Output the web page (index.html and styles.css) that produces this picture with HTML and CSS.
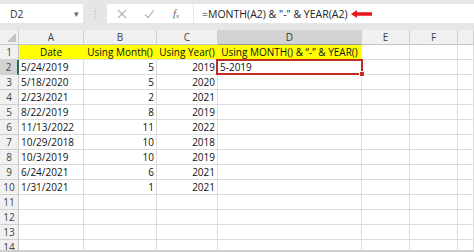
FILE: index.html
```html
<!DOCTYPE html>
<html>
<head>
<meta charset="utf-8">
<link rel="stylesheet" href="styles.css">
</head>
<body>
<div class="app">
  <div class="fbar">
    <div class="namebox"><span>D2</span><span class="dd">▾</span></div>
    <div class="sep">⁝</div>
    <div class="btns">
      <svg class="ic" width="10" height="10" viewBox="0 0 10 10"><path d="M1 1L9 9M9 1L1 9" stroke="#b4b4b4" stroke-width="1.2" fill="none"/></svg>
      <svg class="ic" width="11" height="10" viewBox="0 0 11 10"><path d="M1 5.5L4 8.5L10 1" stroke="#b4b4b4" stroke-width="1.2" fill="none"/></svg>
      <span class="fx">f<sub>x</sub></span>
    </div>
    <div class="input">
      <span class="ftext">=MONTH(A2) &amp; "-" &amp; YEAR(A2)</span>
      <svg class="arrow" width="21" height="8" viewBox="0 0 21 8"><path d="M0 4L6 0V2.2H21V5.8H6V8Z" fill="#e8161b"/></svg>
    </div>
  </div>
  <div class="grid">
    <div class="c h corner"><span class="tri"></span></div><div class="c h">A</div><div class="c h">B</div><div class="c h">C</div><div class="c h sel">D</div><div class="c h">E</div><div class="c h">F</div><div class="c h"></div>

    <div class="c rh">1</div><div class="c y ctr">Date</div><div class="c y ctr">Using Month()</div><div class="c y ctr">Using Year()</div><div class="c y ctr">Using MONTH() &amp; “-” &amp; YEAR()</div><div class="c"></div><div class="c"></div><div class="c"></div>

    <div class="c rh rsel">2</div><div class="c">5/24/2019</div><div class="c n">5</div><div class="c n">2019</div><div class="c active">5-2019<span class="handle"></span></div><div class="c"></div><div class="c"></div><div class="c"></div>

    <div class="c rh">3</div><div class="c">5/18/2020</div><div class="c n">5</div><div class="c n">2020</div><div class="c"></div><div class="c"></div><div class="c"></div><div class="c"></div>

    <div class="c rh">4</div><div class="c">2/23/2021</div><div class="c n">2</div><div class="c n">2021</div><div class="c"></div><div class="c"></div><div class="c"></div><div class="c"></div>

    <div class="c rh">5</div><div class="c">8/22/2019</div><div class="c n">8</div><div class="c n">2019</div><div class="c"></div><div class="c"></div><div class="c"></div><div class="c"></div>

    <div class="c rh">6</div><div class="c">11/13/2022</div><div class="c n">11</div><div class="c n">2022</div><div class="c"></div><div class="c"></div><div class="c"></div><div class="c"></div>

    <div class="c rh">7</div><div class="c">10/29/2018</div><div class="c n">10</div><div class="c n">2018</div><div class="c"></div><div class="c"></div><div class="c"></div><div class="c"></div>

    <div class="c rh">8</div><div class="c">10/3/2019</div><div class="c n">10</div><div class="c n">2019</div><div class="c"></div><div class="c"></div><div class="c"></div><div class="c"></div>

    <div class="c rh">9</div><div class="c">6/24/2021</div><div class="c n">6</div><div class="c n">2021</div><div class="c"></div><div class="c"></div><div class="c"></div><div class="c"></div>

    <div class="c rh">10</div><div class="c">1/31/2021</div><div class="c n">1</div><div class="c n">2021</div><div class="c"></div><div class="c"></div><div class="c"></div><div class="c"></div>

    <div class="c rh">11</div><div class="c"></div><div class="c"></div><div class="c"></div><div class="c"></div><div class="c"></div><div class="c"></div><div class="c"></div>

    <div class="c rh">12</div><div class="c"></div><div class="c"></div><div class="c"></div><div class="c"></div><div class="c"></div><div class="c"></div><div class="c"></div>

    <div class="c rh">13</div><div class="c"></div><div class="c"></div><div class="c"></div><div class="c"></div><div class="c"></div><div class="c"></div><div class="c"></div>

    <div class="c rh">14</div><div class="c"></div><div class="c"></div><div class="c"></div><div class="c"></div><div class="c"></div><div class="c"></div><div class="c"></div>
  </div>
  <div class="hscroll"></div>
</div>
</body>
</html>
```
FILE: styles.css
```css
html, body {
  margin: 0;
  padding: 0;
  background: #ffffff;
}
.app {
  width: 474px;
  height: 252px;
  overflow: hidden;
  display: flex;
  flex-direction: column;
  font-family: "Open Sans", "Liberation Sans", sans-serif;
  font-size: 10px;
  color: #111;
}
.fbar {
  height: 30px;
  flex: none;
  box-sizing: border-box;
  padding-top: 4px;
  background: #e6e6e6;
  display: flex;
  align-items: flex-start;
}
.namebox {
  width: 83px;
  height: 19px;
  background: #ffffff;
  box-sizing: border-box;
  padding: 0 4px 0 10px;
  display: flex;
  align-items: center;
  justify-content: space-between;
  font-size: 10.4px;
  color: #333;
}
.dd {
  font-size: 9px;
  color: #666;
}
.sep {
  width: 24px;
  height: 19px;
  display: flex;
  align-items: center;
  justify-content: center;
  color: #b9b9b9;
  font-size: 11px;
}
.btns {
  width: 86px;
  height: 19px;
  background: #ffffff;
  display: flex;
  align-items: center;
  box-sizing: border-box;
  padding-left: 10px;
  gap: 17px;
}
.fx {
  font-family: "Liberation Serif", serif;
  font-style: italic;
  font-size: 11px;
  color: #666;
  line-height: 1;
  margin-left: 1px;
}
.fx sub {
  font-size: 7px;
  vertical-align: -1px;
}
.input {
  flex: 1;
  height: 19px;
  margin-left: 1px;
  background: #ffffff;
  display: flex;
  align-items: center;
  padding-left: 8px;
  font-size: 10.5px;
  color: #222;
}
.arrow {
  margin-left: 3px;
}
.grid {
  height: 220px;
  flex: none;
  overflow: hidden;
  display: grid;
  grid-template-columns: 19px 65px 73px 61px 144px 48px 48px 16px;
  grid-auto-rows: 15px;
}
.c {
  box-sizing: border-box;
  border-right: 1px solid #dcdcdc;
  border-bottom: 1px solid #dcdcdc;
  padding: 0 2px;
  line-height: 14px;
  white-space: nowrap;
  position: relative;
}
.h {
  background: #f1f1f1;
  border-right-color: #d0d0d0;
  border-bottom-color: #c6c6c6;
  text-align: center;
  color: #444;
  font-size: 10px;
}
.h.sel {
  background: #d3d3d3;
  border-bottom-color: #9c9c9c;
  color: #333;
}
.corner {
  padding: 0;
}
.tri {
  position: absolute;
  right: 2px;
  bottom: 2px;
  width: 0;
  height: 0;
  border-left: 9px solid transparent;
  border-bottom: 9px solid #c3c3c3;
}
.rh {
  background: #f1f1f1;
  border-right-color: #c6c6c6;
  border-bottom-color: #d0d0d0;
  text-align: center;
  color: #444;
  padding: 0;
  line-height: 15px;
}
.rh.rsel {
  background: #d3d3d3;
  border-right: 2px solid #217346;
}
.y {
  background: #ffff00;
  border-right-color: #ffff00;
}
.ctr {
  text-align: center;
  overflow: visible;
  padding: 0;
}
.n {
  text-align: right;
}
.active::after {
  content: "";
  position: absolute;
  left: -2px;
  top: -1px;
  right: -2px;
  bottom: -1px;
  border: 2px solid #c42b25;
  pointer-events: none;
}
.handle {
  position: absolute;
  right: -4px;
  bottom: -3px;
  width: 4px;
  height: 4px;
  background: #c42b25;
  border: 1px solid #ffffff;
  z-index: 2;
}
.hscroll {
  height: 2px;
  flex: none;
  background: #cfcfcf;
}
```
